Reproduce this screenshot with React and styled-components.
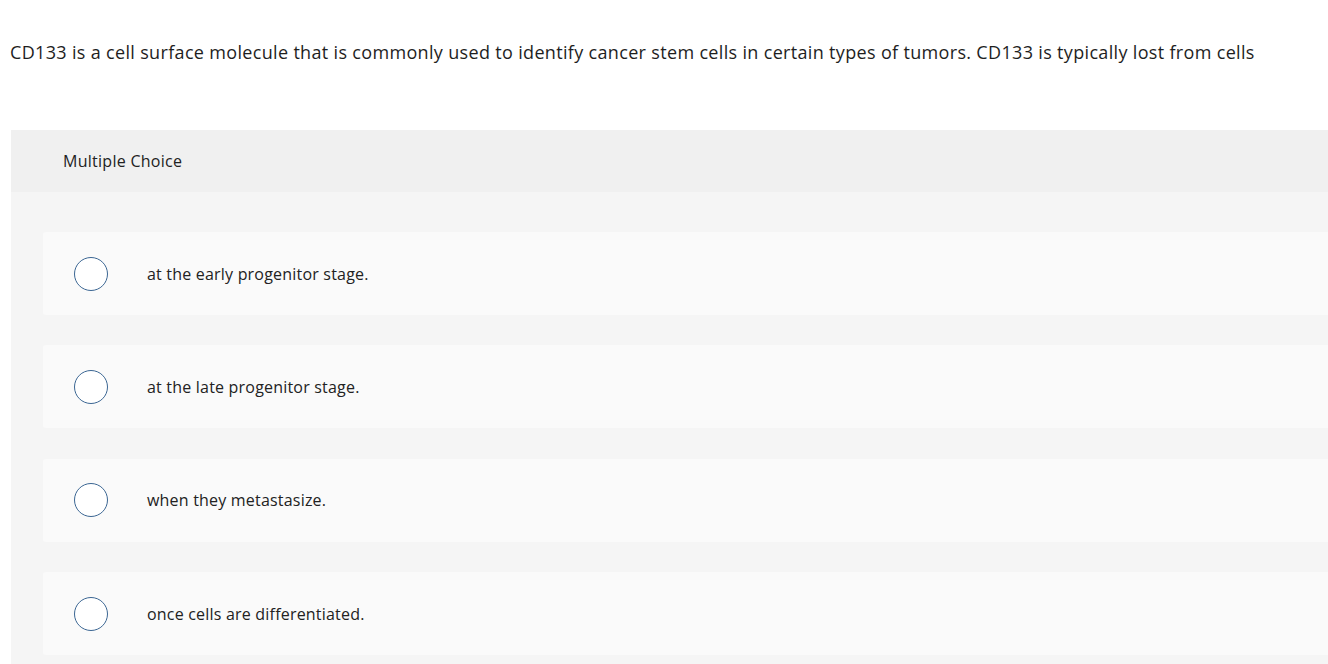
import React from 'react'
import styled, { createGlobalStyle } from "styled-components";

const choices = [
    "at the early progenitor stage.",
    "at the late progenitor stage.",
    "when they metastasize.",
    "once cells are differentiated.",
];

function App() {
  return (
    <>
      <GlobalStyle />
      <Page>
        <Question>
          CD133 is a cell surface molecule that is commonly used to identify cancer stem cells in certain types of tumors. CD133 is typically lost from cells
        </Question>
        <Panel>
          <PanelHeader>Multiple Choice</PanelHeader>
          <ChoiceList>
            {choices.map((c) => (
              <Choice key={c}>
                <Radio />
                <ChoiceText>{c}</ChoiceText>
              </Choice>
            ))}
          </ChoiceList>
        </Panel>
      </Page>
    </>
  )
}

export default App

const GlobalStyle = createGlobalStyle`
    html, body {
        margin: 0;
        padding: 0;
        background: #fff;
        overflow: hidden;
    }
    body {
        font-family: "Open Sans", Lato, sans-serif;
        color: #222;
    }
`;

const Page = styled.div`
    width: 1328px;
    height: 664px;
    overflow: hidden;
    padding-top: 40px;
    box-sizing: border-box;
`;

const Question = styled.p`
    margin: 0 0 0 10px;
    font-size: 18px;
    line-height: 24px;
    letter-spacing: 0.33px;
    white-space: nowrap;
    color: #1e1e1e;
`;

const Panel = styled.div`
    margin: 66px 0 0 11px;
    width: 1400px;
    background-color: #f5f5f5;
`;

const PanelHeader = styled.div`
    height: 62px;
    background-color: #f0f0f0;
    display: flex;
    align-items: center;
    padding-left: 52px;
    padding-bottom: 1px;
    box-sizing: border-box;
    font-size: 16px;
    letter-spacing: 0.27px;
    color: #222;
`;

const ChoiceList = styled.div`
    display: flex;
    flex-direction: column;
    gap: 30px;
    padding: 40px 0 20px 32px;
`;

const Choice = styled.div`
    height: 83px;
    margin-bottom: 0.4px;
    background-color: #fafafa;
    border-radius: 3px;
    display: flex;
    align-items: center;
    padding-left: 31px;
`;

const Radio = styled.span`
    width: 32px;
    height: 32px;
    border: 1.5px solid #3b6693;
    border-radius: 50%;
    background: #fff;
    flex-shrink: 0;
`;

const ChoiceText = styled.span`
    margin-left: 39px;
    font-size: 16px;
    letter-spacing: 0.2px;
    color: #222;
`;
